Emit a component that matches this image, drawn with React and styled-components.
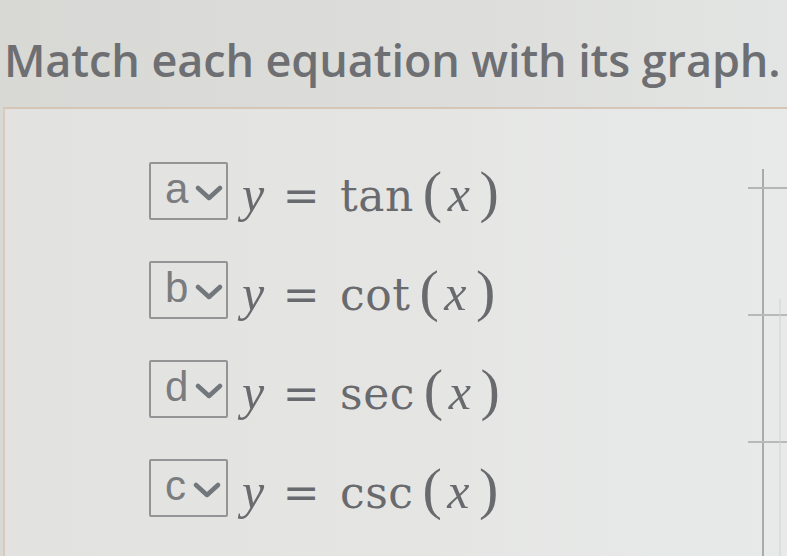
import styled, { createGlobalStyle } from "styled-components"

const GlobalStyle = createGlobalStyle`
    html, body {
        margin: 0;
        padding: 0;
        background: #dadad7;
        overflow: hidden;
    }
`

const Page = styled.div`
    width: 787px;
    height: 556px;
    display: flex;
    flex-direction: column;
    background: linear-gradient(90deg, #d8d8d5 0%, #dddedb 60%, #e3e5e4 100%);
`
const Title = styled.h1`
    margin: 0;
    height: 107px;
    box-sizing: border-box;
    padding: 29px 0 0 4px;
    font-family: "Open Sans", sans-serif;
    font-weight: 600;
    font-size: 45px;
    letter-spacing: -0.1px;
    color: #6e6f72;
    white-space: nowrap;
`
const Panel = styled.div`
    flex: 1;
    display: flex;
    margin-left: 3px;
    border-top: 2px solid #d7c6b6;
    border-left: 2px solid #d9cabd;
    background: linear-gradient(90deg, #e2e2e0 0%, #e5e6e4 55%, #e8eaea 100%);
`
const List = styled.div`
    display: flex;
    flex-direction: column;
    gap: 41px;
    padding: 53px 0 0 144px;
`
const Row = styled.div`
    display: flex;
    align-items: center;
    gap: 14px;
    height: 58px;
`
const Select = styled.div`
    width: 79px;
    height: 58px;
    box-sizing: border-box;
    border: 2px solid #939496;
    border-radius: 2px;
    display: flex;
    align-items: center;
    padding: 0 0 4px 14px;
    gap: 7px;
    color: #7b7c7f;
    font-family: "Liberation Sans", Arial, sans-serif;
    font-size: 42px;
`
const Chevron = styled.svg`
    width: 28px;
    height: 16px;
    margin-top: 8px;
`
const Equation = styled.div`
    font-family: "DejaVu Serif", "Liberation Serif", serif;
    font-size: 44px;
    color: #696a6e;
    white-space: nowrap;
    letter-spacing: 0.5px;
`
const Var = styled.i`
    font-style: italic;
    font-family: "Liberation Serif", serif;
    font-size: 50px;
`
const Eq = styled.span`
    margin: 0 20px 0 18px;
`
const Paren = styled.span`
    font-family: "Liberation Serif", serif;
    font-size: 58px;
    margin: 0 5px 0 9px;
`
const Axis = styled.svg`
    margin-left: auto;
    width: 39px;
    height: 447px;
    flex-shrink: 0;
`

const rows = [
    { pick: "a", fn: "tan" },
    { pick: "b", fn: "cot" },
    { pick: "d", fn: "sec" },
    { pick: "c", fn: "csc" },
]

function Dropdown({ value }) {
    return (
        <Select>
            <span>{value}</span>
            <Chevron viewBox="0 0 28 16">
                <path d="M3 3 L14 13 L25 3" fill="none" stroke="#72777b" strokeWidth="4.5" strokeLinecap="round" strokeLinejoin="round" />
            </Chevron>
        </Select>
    )
}

export default function App() {
    return (
        <Page>
            <GlobalStyle />
            <Title>Match each equation with its graph.</Title>
            <Panel>
                <List>
                    {rows.map(r => (
                        <Row key={r.fn}>
                            <Dropdown value={r.pick} />
                            <Equation>
                                <Var>y</Var>
                                <Eq>=</Eq>
                                {r.fn}
                                <Paren>(</Paren>
                                <Var>x</Var>
                                <Paren>)</Paren>
                            </Equation>
                        </Row>
                    ))}
                </List>
                {/* edge of the first graph's y axis */}
                <Axis viewBox="0 0 39 447">
                    <line x1="15" y1="60" x2="15" y2="447" stroke="#a9abab" strokeWidth="2" />
                    <line x1="0" y1="79" x2="39" y2="79" stroke="#b4b6b6" strokeWidth="2" />
                    <line x1="0" y1="206" x2="39" y2="206" stroke="#b8baba" strokeWidth="2" />
                    <line x1="0" y1="333" x2="39" y2="333" stroke="#b8baba" strokeWidth="2" />
                    <line x1="32" y1="190" x2="32" y2="447" stroke="#cfd2d2" strokeWidth="1" />
                </Axis>
            </Panel>
        </Page>
    )
}
